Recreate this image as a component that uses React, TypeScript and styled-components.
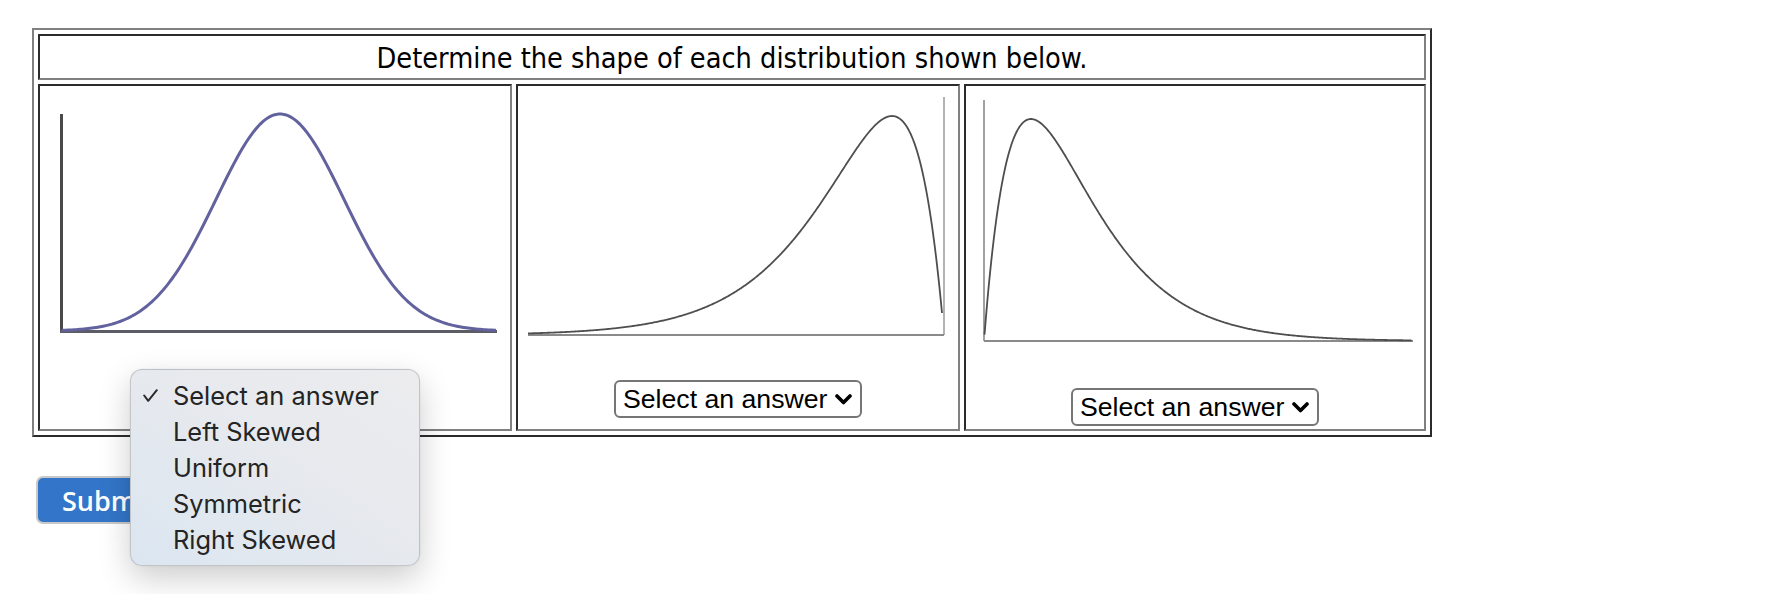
import React from "react";
import styled, { createGlobalStyle } from "styled-components";

const buildPath = (
  from: number,
  to: number,
  step: number,
  fn: (x: number) => number
): string => {
  const pts: string[] = [];
  for (let x = from; x <= to + 0.001; x += step) {
    pts.push(`${x.toFixed(2)},${fn(x).toFixed(2)}`);
  }
  return "M" + pts.join(" L");
};

/* symmetric bell */
const bellPath = buildPath(62, 496, 2, (x) => 331 - 217 * Math.exp(-((x - 280) ** 2) / (2 * 64 * 64)));

/* left skewed: mirrored gamma (k = 2) measured from the right-hand line */
const leftSkewPath = buildPath(528, 942, 1, (x) => {
  const v = 944 - x;
  const m = 52;
  return 335 - 219 * (v / m) * Math.exp(1 - v / m);
});

/* right skewed: gamma (k = 2) measured from the left axis */
const rightSkewPath = buildPath(984.5, 1412, 1, (x) => {
  const u = x - 984;
  const m = 47;
  return 341 - 222 * (u / m) * Math.exp(1 - u / m);
});

const GlobalStyle = createGlobalStyle`
  html, body {
    margin: 0;
    padding: 0;
    background: #ffffff;
  }
  body {
    width: 1770px;
    height: 594px;
    overflow: hidden;
  }
`;

const Page = styled.div`
  position: relative;
  box-sizing: border-box;
  width: 1770px;
  height: 594px;
  padding: 28px 0 0 32px;
  display: flex;
  flex-direction: column;
  align-items: flex-start;
`;

const Table = styled.div`
  display: grid;
  grid-template-columns: 474px 444px 462px;
  grid-template-rows: 46px 347px;
  gap: 4px;
  padding: 4px;
  border: 2px solid;
  border-color: #808080 #2b2b2b #2b2b2b #808080;
  background: #ffffff;
`;

const Cell = styled.div<{ $padTop?: number }>`
  box-sizing: border-box;
  border: 2px solid;
  border-color: #2b2b2b #808080 #808080 #2b2b2b;
  display: flex;
  flex-direction: column;
  align-items: center;
  padding-top: ${(p) => p.$padTop ?? 0}px;
`;

const TitleCell = styled(Cell)`
  grid-column: 1 / -1;
  justify-content: center;
  font-family: "DejaVu Sans Condensed", "DejaVu Sans", sans-serif;
  font-stretch: condensed;
  font-size: 28.6px;
  color: #000000;
  padding-top: 1px;
`;

const Chart = styled.svg`
  display: block;
  flex: none;
`;

const SelectBox = styled.div<{ $gap: number }>`
  box-sizing: border-box;
  margin-top: ${(p) => p.$gap}px;
  width: 248px;
  height: 38px;
  border: 2px solid #767676;
  border-radius: 6px;
  background: #ffffff;
  display: flex;
  align-items: center;
  justify-content: space-between;
  padding: 0 8px 0 7px;
  font-family: "Liberation Sans", Arial, sans-serif;
  font-size: 26.67px;
  color: #000000;
  flex: none;
`;

const Chevron = styled.svg`
  display: block;
  flex: none;
`;

const SubmitButton = styled.button`
  margin: 39px 0 0 4px;
  height: 48px;
  padding: 0 24px;
  background: #3376c9;
  color: #ffffff;
  border: 2px solid #c9c9c9;
  border-radius: 7px;
  font-family: "Open Sans", "Noto Sans", sans-serif;
  font-weight: 600;
  font-size: 27px;
  line-height: 1;
`;

const Menu = styled.div`
  position: absolute;
  left: 130px;
  top: 369px;
  width: 290px;
  height: 197px;
  box-sizing: border-box;
  padding: 7px 0 9px;
  border: 1px solid rgba(0, 0, 0, 0.16);
  border-radius: 12px;
  background: linear-gradient(to top right, #dbe6f1 0%, #e6e9ee 50%, #ececee 100%);
  box-shadow: 0 12px 32px rgba(0, 0, 0, 0.2), 0 0 2px rgba(0, 0, 0, 0.08);
`;

const MenuItem = styled.div`
  height: 36px;
  display: flex;
  align-items: center;
  padding-left: 12px;
  font-family: Inter, "Liberation Sans", sans-serif;
  font-size: 25.4px;
  color: #242424;
  white-space: nowrap;
`;

const CheckSlot = styled.span`
  width: 30px;
  flex: none;
  display: flex;
  align-items: center;
`;

const SelectDisplay: React.FC<{ gap: number }> = ({ gap }) => (
  <SelectBox $gap={gap}>
    <span>Select an answer</span>
    <Chevron width="17" height="11" viewBox="0 0 17 11">
      <polyline points="2,2 8.5,8.5 15,2" fill="none" stroke="#000" strokeWidth="3.6" strokeLinecap="round" strokeLinejoin="round" />
    </Chevron>
  </SelectBox>
);

const options = ["Select an answer", "Left Skewed", "Uniform", "Symmetric", "Right Skewed"];

export default function App() {
  return (
    <>
      <GlobalStyle />
      <Page>
        <Table>
          <TitleCell>Determine the shape of each distribution shown below.</TitleCell>
          <Cell $padTop={14}>
            <Chart width="460" height="240" viewBox="45 100 460 240">
              <line x1="61.5" y1="114" x2="61.5" y2="333" stroke="#4a4a4a" strokeWidth="3" />
              <line x1="60" y1="331.5" x2="497" y2="331.5" stroke="#5c5c66" strokeWidth="3.2" />
              <path d={bellPath} fill="none" stroke="#62629e" strokeWidth="3" strokeLinejoin="round" />
            </Chart>
            <SelectDisplay gap={36} />
          </Cell>
          <Cell $padTop={6}>
            <Chart width="440" height="250" viewBox="518 92 440 250">
              <line x1="944" y1="97" x2="944" y2="335" stroke="#9a9a9a" strokeWidth="1.5" />
              <line x1="528" y1="335" x2="944" y2="335" stroke="#8a8a8a" strokeWidth="2" />
              <path d={leftSkewPath} fill="none" stroke="#4e4e4e" strokeWidth="1.8" strokeLinejoin="round" />
            </Chart>
            <SelectDisplay gap={38} />
          </Cell>
          <Cell $padTop={8}>
            <Chart width="450" height="254" viewBox="970 94 450 254">
              <line x1="984" y1="100" x2="984" y2="341" stroke="#8a8a8a" strokeWidth="1.6" />
              <line x1="984" y1="341" x2="1413" y2="341" stroke="#8a8a8a" strokeWidth="2" />
              <path d={rightSkewPath} fill="none" stroke="#4e4e4e" strokeWidth="1.8" strokeLinejoin="round" />
            </Chart>
            <SelectDisplay gap={40} />
          </Cell>
        </Table>
        <SubmitButton type="button">Submit</SubmitButton>
        <Menu>
          {options.map((o, i) => (
            <MenuItem key={o}>
              <CheckSlot>
                {i === 0 && (
                  <svg width="15" height="13" viewBox="0 0 15 13">
                    <polyline points="1.2,6.5 5.2,11.8 13.8,1.2" fill="none" stroke="#2a2a2a" strokeWidth="2" strokeLinecap="round" strokeLinejoin="round" />
                  </svg>
                )}
              </CheckSlot>
              <span>{o}</span>
            </MenuItem>
          ))}
        </Menu>
      </Page>
    </>
  );
}
